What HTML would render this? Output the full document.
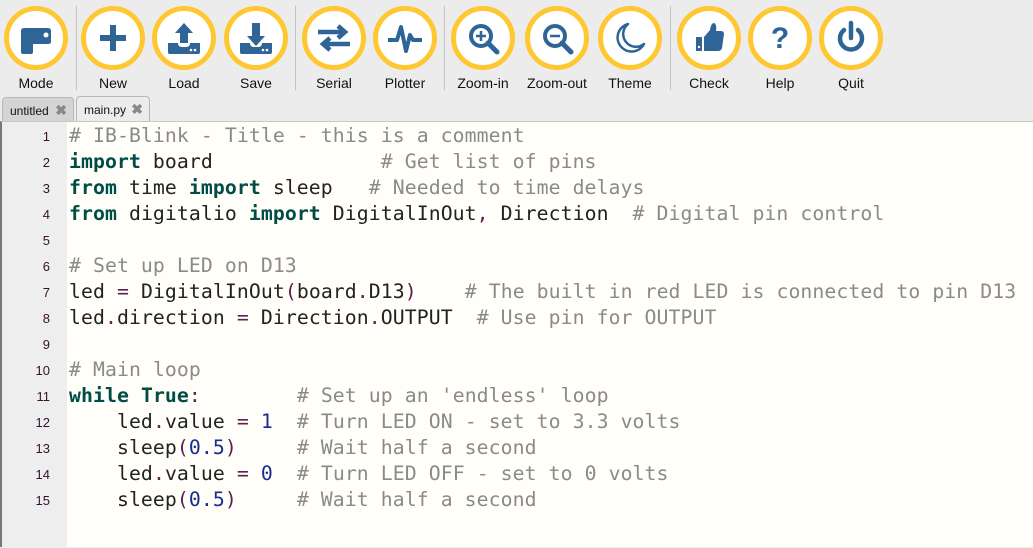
<!DOCTYPE html>
<html><head><meta charset="utf-8"><style>
*{margin:0;padding:0;box-sizing:border-box}
body{width:1033px;height:547px;overflow:hidden;background:#ececec;font-family:"Liberation Sans",sans-serif;position:relative}
.btn{position:absolute;top:5px;width:66px;height:66px}
.lbl{position:absolute;top:75px;font-size:14px;color:#111;width:90px;text-align:center}
.sep{position:absolute;top:6px;width:1px;height:84px;background:#c4c4c4}
.tab{position:absolute;height:25px;font-size:12px;color:#111;border:1px solid #b8b8b8;border-bottom:none;border-radius:4px 4px 0 0;padding:6px 0 0 7px}
.x{position:absolute;right:6px;top:4px;font-size:14px;color:#888;font-weight:bold}
#ed{position:absolute;left:0;top:121px;width:1033px;height:426px;background:#fffef8;border-left:2px solid #777;border-top:1px solid #c8c8c8}
#gut{position:absolute;left:0;top:0;width:65px;height:426px;background:#eeeeef}
.ln{position:absolute;right:17px;font-size:13px;color:#3a1030;font-family:"Liberation Sans",sans-serif}
pre{position:absolute;left:67px;top:1px;font-family:"DejaVu Sans Mono",monospace;font-size:19.8px;letter-spacing:0.08px;line-height:26px;color:#222}
.k{color:#004d48;font-weight:bold}.c{color:#8a8a8a}.o{color:#5a2050}.n{color:#1a2a90}
</style></head><body>
<svg width="0" height="0" style="position:absolute"><defs><g id="ring"><circle cx="0" cy="0" r="29.5" fill="#fff" stroke="#ffc832" stroke-width="5"/></g></defs></svg>

<div class="btn" style="left:3px"><svg viewBox="-33 -33 66 66" width="66" height="66"><use href="#ring"/><path d="M-15 -7 Q-15 -10 -12 -10 H12 Q15 -10 15 -7 V4 Q15 6 12 6 H-3 V14 Q-3 16 -5 16 H-13 Q-15 16 -15 14 Z" fill="#2f6496"/><circle cx="10" cy="-3" r="2.5" fill="#fff"/></svg></div>
<div class="lbl" style="left:-9px">Mode</div>
<div class="sep" style="left:76px"></div>

<div class="btn" style="left:80px"><svg viewBox="-33 -33 66 66" width="66" height="66"><use href="#ring"/><path d="M-3 -13 H3 V-3 H13 V3 H3 V13 H-3 V3 H-13 V-3 H-3 Z" fill="#2f6496"/></svg></div>
<div class="lbl" style="left:68px">New</div>

<div class="btn" style="left:151px"><svg viewBox="-33 -33 66 66" width="66" height="66"><use href="#ring"/><path d="M-16 5 H-6 Q-6 9 -2 9 H2 Q6 9 6 5 H16 V14 Q16 16 14 16 H-14 Q-16 16 -16 14 Z" fill="#2f6496"/><path d="M0 -15 L9 -5 H4 V5 H-4 V-5 H-9 Z" fill="#2f6496"/><circle cx="7" cy="12" r="1.3" fill="#fff"/><circle cx="11" cy="12" r="1.3" fill="#fff"/></svg></div>
<div class="lbl" style="left:139px">Load</div>

<div class="btn" style="left:223px"><svg viewBox="-33 -33 66 66" width="66" height="66"><use href="#ring"/><path d="M-16 5 H-6 Q-6 9 -2 9 H2 Q6 9 6 5 H16 V14 Q16 16 14 16 H-14 Q-16 16 -16 14 Z" fill="#2f6496"/><path d="M0 8 L9 -2 H4 V-15 H-4 V-2 H-9 Z" fill="#2f6496"/><circle cx="7" cy="12" r="1.3" fill="#fff"/><circle cx="11" cy="12" r="1.3" fill="#fff"/></svg></div>
<div class="lbl" style="left:211px">Save</div>
<div class="sep" style="left:295px"></div>

<div class="btn" style="left:301px"><svg viewBox="-33 -33 66 66" width="66" height="66"><use href="#ring"/><path d="M-16 -6 H10 M4 -12 L11 -6 L4 0 M16 6 H-10 M-4 0 L-11 6 L-4 12" stroke="#2f6496" stroke-width="4.5" fill="none"/></svg></div>
<div class="lbl" style="left:289px">Serial</div>

<div class="btn" style="left:372px"><svg viewBox="-33 -33 66 66" width="66" height="66"><use href="#ring"/><path d="M-17 2 H-8 L-4 -11 L1 13 L5 -3 L8 2 H17" stroke="#2f6496" stroke-width="4" fill="none" stroke-linejoin="round"/></svg></div>
<div class="lbl" style="left:360px">Plotter</div>
<div class="sep" style="left:444px"></div>

<div class="btn" style="left:450px"><svg viewBox="-33 -33 66 66" width="66" height="66"><use href="#ring"/><circle cx="-2" cy="-2" r="10" stroke="#2f6496" stroke-width="4" fill="none"/><path d="M5 5 L14 14" stroke="#2f6496" stroke-width="5" stroke-linecap="round"/><path d="M-7 -2 H3 M-2 -7 V3" stroke="#2f6496" stroke-width="2.5"/></svg></div>
<div class="lbl" style="left:438px">Zoom-in</div>

<div class="btn" style="left:524px"><svg viewBox="-33 -33 66 66" width="66" height="66"><use href="#ring"/><circle cx="-2" cy="-2" r="10" stroke="#2f6496" stroke-width="4" fill="none"/><path d="M5 5 L14 14" stroke="#2f6496" stroke-width="5" stroke-linecap="round"/><path d="M-7 -2 H3" stroke="#2f6496" stroke-width="2.5"/></svg></div>
<div class="lbl" style="left:512px">Zoom-out</div>

<div class="btn" style="left:597px"><svg viewBox="-33 -33 66 66" width="66" height="66"><use href="#ring"/><path d="M-2 -14 A14 14 0 1 0 14 6 A11 11 0 0 1 -2 -14 Z" stroke="#2f6496" stroke-width="2.5" fill="none" stroke-linejoin="round"/></svg></div>
<div class="lbl" style="left:585px">Theme</div>
<div class="sep" style="left:670px"></div>

<div class="btn" style="left:676px"><svg viewBox="-33 -33 66 66" width="66" height="66"><use href="#ring"/><rect x="-13" y="-1" width="6" height="14" fill="#2f6496"/><path d="M-5 -1 L1 -8 Q2 -15 5 -15 Q8 -14 7 -7 H12 Q15 -7 15 -4 L13 10 Q12 13 9 13 H-5 Z" fill="#2f6496"/><circle cx="-10" cy="9" r="1.2" fill="#fff"/></svg></div>
<div class="lbl" style="left:664px">Check</div>

<div class="btn" style="left:747px"><svg viewBox="-33 -33 66 66" width="66" height="66"><use href="#ring"/><text x="0" y="10" text-anchor="middle" font-family="Liberation Sans,sans-serif" font-weight="bold" font-size="30" fill="#2f6496">?</text></svg></div>
<div class="lbl" style="left:735px">Help</div>

<div class="btn" style="left:818px"><svg viewBox="-33 -33 66 66" width="66" height="66"><use href="#ring"/><path d="M-7 -8 A11 11 0 1 0 7 -8" stroke="#2f6496" stroke-width="4.5" fill="none" stroke-linecap="round"/><path d="M0 -15 V0" stroke="#2f6496" stroke-width="4.5" stroke-linecap="round"/></svg></div>
<div class="lbl" style="left:806px">Quit</div>

<div class="tab" style="left:2px;top:97px;width:72px;background:#d4d4d4">untitled<span class="x">✖</span></div>
<div class="tab" style="left:76px;top:96px;width:74px;height:26px;background:#ececec">main.py<span class="x">✖</span></div>

<div id="ed"><div id="gut">
<div class="ln" style="top:7px">1</div><div class="ln" style="top:33px">2</div><div class="ln" style="top:59px">3</div><div class="ln" style="top:85px">4</div><div class="ln" style="top:111px">5</div><div class="ln" style="top:137px">6</div><div class="ln" style="top:163px">7</div><div class="ln" style="top:189px">8</div><div class="ln" style="top:215px">9</div><div class="ln" style="top:241px">10</div><div class="ln" style="top:267px">11</div><div class="ln" style="top:293px">12</div><div class="ln" style="top:319px">13</div><div class="ln" style="top:345px">14</div><div class="ln" style="top:371px">15</div>
</div>
<pre><span class="c"># IB-Blink - Title - this is a comment</span>
<span class="k">import</span> board              <span class="c"># Get list of pins</span>
<span class="k">from</span> time <span class="k">import</span> sleep   <span class="c"># Needed to time delays</span>
<span class="k">from</span> digitalio <span class="k">import</span> DigitalInOut<span class="o">,</span> Direction  <span class="c"># Digital pin control</span>

<span class="c"># Set up LED on D13</span>
led <span class="o">=</span> DigitalInOut<span class="o">(</span>board<span class="o">.</span>D13<span class="o">)</span>    <span class="c"># The built in red LED is connected to pin D13</span>
led<span class="o">.</span>direction <span class="o">=</span> Direction<span class="o">.</span>OUTPUT  <span class="c"># Use pin for OUTPUT</span>

<span class="c"># Main loop</span>
<span class="k">while</span> <span class="k">True</span><span class="o">:</span>        <span class="c"># Set up an 'endless' loop</span>
    led<span class="o">.</span>value <span class="o">=</span> <span class="n">1</span>  <span class="c"># Turn LED ON - set to 3.3 volts</span>
    sleep<span class="o">(</span><span class="n">0.5</span><span class="o">)</span>     <span class="c"># Wait half a second</span>
    led<span class="o">.</span>value <span class="o">=</span> <span class="n">0</span>  <span class="c"># Turn LED OFF - set to 0 volts</span>
    sleep<span class="o">(</span><span class="n">0.5</span><span class="o">)</span>     <span class="c"># Wait half a second</span></pre>
</div>
</body></html>
